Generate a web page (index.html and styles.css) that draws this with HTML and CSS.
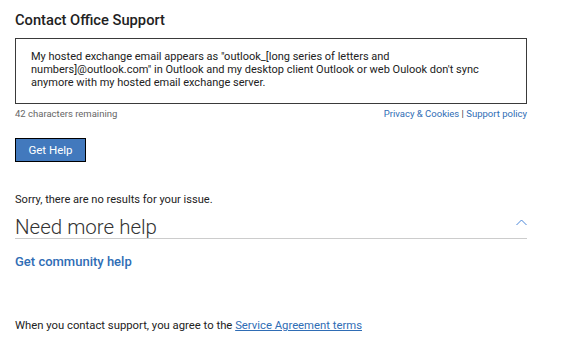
FILE: index.html
```html
<!DOCTYPE html>
<html>
<head>
<meta charset="utf-8">
<link rel="stylesheet" href="styles.css">
</head>
<body>
<div class="page">
  <h1 class="title">Contact Office Support</h1>
  <div class="issue">My hosted exchange email appears as "outlook_[long series of letters and numbers]@outlook.com" in Outlook and my desktop client Outlook or web Oulook don't sync anymore with my hosted email exchange server.</div>
  <div class="meta">
    <span class="remaining">42 characters remaining</span>
    <span class="links"><a href="#">Privacy &amp; Cookies</a> | <a href="#">Support policy</a></span>
  </div>
  <button class="help-btn">Get Help</button>
  <p class="sorry">Sorry, there are no results for your issue.</p>
  <div class="more">
    <span class="more-title">Need more help</span>
    <svg class="chevron" width="11" height="7" viewBox="0 0 11 7"><path d="M0.5 6 L5.5 1 L10.5 6" fill="none" stroke="#4a86d8" stroke-width="1"/></svg>
  </div>
  <a class="community" href="#">Get community help</a>
  <p class="agree">When you contact support, you agree to the <a href="#">Service Agreement terms</a></p>
</div>
</body>
</html>
```
FILE: styles.css
```css
html, body {
  margin: 0;
  padding: 0;
  background: #fff;
}
body {
  font-family: Roboto, "Noto Sans", sans-serif;
  color: #222;
}
.page {
  width: 512px;
  padding: 10px 0 0 15px;
  display: flex;
  flex-direction: column;
  align-items: flex-start;
}
.title {
  margin: 0;
  font-size: 14.7px;
  font-weight: 500;
  line-height: 20px;
  color: #222;
}
.issue {
  box-sizing: border-box;
  width: 512px;
  height: 66px;
  margin-top: 8px;
  border: 1px solid #3a3a3a;
  padding: 11px 15px 0 15px;
  font-size: 11px;
  line-height: 13px;
  color: #222;
}
.meta {
  width: 512px;
  display: flex;
  justify-content: space-between;
  font-size: 9.5px;
  line-height: 14px;
  margin-top: 3px;
}
.remaining { color: #666; }
.links { color: #444; }
.links a { color: #2f6db5; text-decoration: none; }
.help-btn {
  margin-top: 17px;
  width: 71px;
  height: 24px;
  background: #4279bd;
  border: 1px solid #000;
  color: #fff;
  font-family: inherit;
  font-size: 11.5px;
  padding: 0;
}
.sorry {
  margin: 31px 0 0 0;
  font-size: 11.1px;
  line-height: 14px;
  color: #222;
}
.more {
  width: 512px;
  display: flex;
  justify-content: space-between;
  align-items: flex-end;
  border-bottom: 1px solid #ccc;
  height: 31px;
}
.more-title {
  font-size: 20.5px;
  font-weight: 300;
  color: #333;
  line-height: 22px;
}
.chevron { margin-right: 0; margin-bottom: 12px; }
.community {
  margin-top: 14px;
  font-size: 13px;
  font-weight: 500;
  color: #2f6db5;
  text-decoration: none;
  line-height: 18px;
}
.agree {
  margin: 48px 0 0 0;
  font-size: 11.3px;
  line-height: 14px;
  color: #222;
}
.agree a { color: #2f6db5; }
```
